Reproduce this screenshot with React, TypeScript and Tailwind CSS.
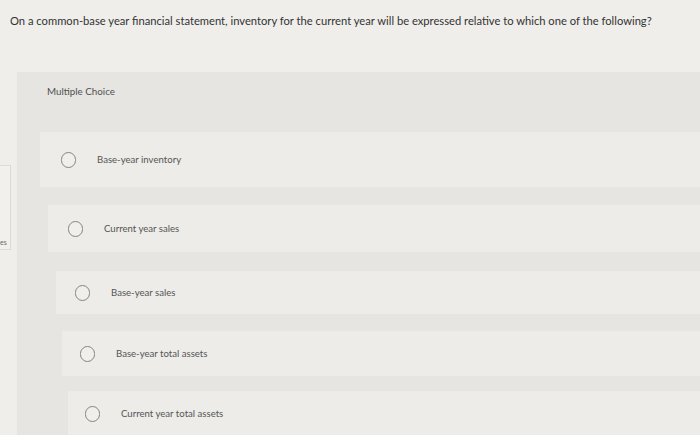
const options = [
  { label: "Base-year inventory", row: "mt-[36px] ml-[23px] h-[55px]", pad: "pl-[21px]" },
  { label: "Current year sales", row: "mt-[18px] ml-[31px] h-[47px]", pad: "pl-[20px]" },
  { label: "Base-year sales", row: "mt-[19px] ml-[39px] h-[43px]", pad: "pl-[19px]" },
  { label: "Base-year total assets", row: "mt-[17px] ml-[45px] h-[45px]", pad: "pl-[18px]" },
  { label: "Current year total assets", row: "mt-[15px] ml-[51px] h-[45px]", pad: "pl-[17px]" },
];

function Radio() {
  return (
    <span className="block h-[16px] w-[15px] shrink-0 rounded-full border-[1.5px] border-[#858481] bg-[#f0efec]" />
  );
}

export default function App() {
  return (
    <div className="flex h-[435px] w-[700px] flex-col overflow-hidden bg-[#efeeeb] font-['Lato',_'Liberation_Sans',_sans-serif]">
      <p className="whitespace-nowrap pl-[10px] pt-[14px] text-[11.2px] leading-[14px] text-[#333]">
        On a common-base year financial statement, inventory for the current year will be expressed relative to which one of the following?
      </p>

      <div className="mt-[44px] flex flex-1">
        {/* bit of the sidebar showing at the left edge */}
        <div className="w-[17px] shrink-0 pt-[93px]">
          <div className="flex h-[85px] w-[11px] items-end overflow-hidden border-y border-r border-[#dddbd7] bg-[#f1f0ec] pb-[3px]">
            <span className="text-[7px] leading-none text-[#666]">es</span>
          </div>
        </div>

        <section className="flex flex-1 flex-col bg-[#e6e5e1] pt-[15px]">
          <h3 className="pl-[30px] text-[9.8px] leading-[9px] text-[#505050]">
            Multiple Choice
          </h3>

          {options.map((opt) => (
            <label
              key={opt.label}
              className={`flex shrink-0 items-center bg-[#edece8] ${opt.row} ${opt.pad}`}
            >
              <Radio />
              <span className="ml-[21px] text-[9.6px] leading-none text-[#555]">
                {opt.label}
              </span>
            </label>
          ))}
        </section>
      </div>
    </div>
  );
}
